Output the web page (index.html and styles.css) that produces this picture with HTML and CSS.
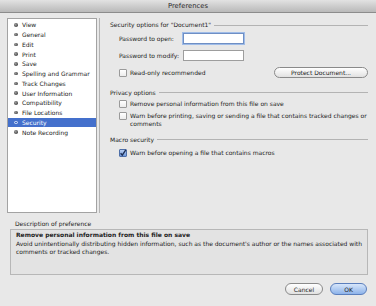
FILE: index.html
```html
<!DOCTYPE html>
<html lang="en">
  <head>
    <meta charset="UTF-8" />
    <title>Preferences</title>
    <link rel="stylesheet" href="styles.css">
  </head>
  <body>
    <div class="window">
      <div class="titlebar">Preferences</div>

      <div class="main">
        <ul class="sidebar">
          <li>View</li>
          <li>General</li>
          <li>Edit</li>
          <li>Print</li>
          <li>Save</li>
          <li>Spelling and Grammar</li>
          <li>Track Changes</li>
          <li>User Information</li>
          <li>Compatibility</li>
          <li>File Locations</li>
          <li class="selected">Security</li>
          <li>Note Recording</li>
        </ul>
        <div class="divider"></div>

        <div class="pane">
          <div class="group-title first">
            <span>Security options for "Document1"</span>
            <span class="rule"></span>
          </div>
          <div class="field">
            <label>Password to open:</label>
            <input type="text" class="focused" />
          </div>
          <div class="field">
            <label>Password to modify:</label>
            <input type="text" />
          </div>
          <div class="field readonly">
            <div class="check-row">
              <span class="box"></span>
              <span>Read-only recommended</span>
            </div>
            <button class="btn protect">Protect Document...</button>
          </div>

          <div class="group-title privacy">
            <span>Privacy options</span>
            <span class="rule"></span>
          </div>
          <div class="check-row option remove">
            <span class="box"></span>
            <span>Remove personal information from this file on save</span>
          </div>
          <div class="check-row option warn">
            <span class="box"></span>
            <span>Warn before printing, saving or sending a file that contains tracked changes or comments</span>
          </div>

          <div class="group-title macro">
            <span>Macro security</span>
            <span class="rule"></span>
          </div>
          <div class="check-row option macros">
            <span class="box checked">
              <svg width="8" height="8" viewBox="0 0 8 8">
                <path d="M1.6 4.2 L3.3 6.2 L6.8 0.9" fill="none" stroke="#1d2f55" stroke-width="1.4" />
              </svg>
            </span>
            <span>Warn before opening a file that contains macros</span>
          </div>
        </div>
      </div>

      <div class="desc">
        <div class="desc-label">Description of preference</div>
        <div class="desc-box">
          <div class="desc-title">Remove personal information from this file on save</div>
          <div>Avoid unintentionally distributing hidden information, such as the document's author or the names associated with comments or tracked changes.</div>
        </div>
      </div>

      <div class="buttons">
        <button class="btn cancel">Cancel</button>
        <button class="btn ok">OK</button>
      </div>
    </div>
  </body>
</html>
```

FILE: styles.css
```css
body {
  margin: 0;
  padding: 0;
  background-color: #e8e8e8;
  font-family: "DejaVu Sans", sans-serif;
  font-size: 6px;
  color: #222222;
}

.window {
  width: 376px;
  height: 306px;
  overflow: hidden;
}

.titlebar {
  height: 12px;
  line-height: 12px;
  text-align: center;
  font-size: 6.8px;
  color: #2a2a2a;
  background: linear-gradient(#e2e2e2, #b9b9b9);
  border-bottom: 1px solid #8c8c8c;
}

.main {
  display: flex;
  padding: 5px 8px 0 7px;
  height: 195px;
}

/* left list of categories */
.sidebar {
  list-style: none;
  margin: 0;
  padding: 1px 0 0 0;
  width: 88px;
  background-color: #ffffff;
  border: 1px solid #a3a3a3;
}

.sidebar li {
  display: flex;
  align-items: center;
  height: 9.75px;
  padding-left: 6px;
  white-space: nowrap;
}

.sidebar li::before {
  content: "";
  width: 3.5px;
  height: 3.5px;
  margin-right: 4.5px;
  border-radius: 50%;
  background: radial-gradient(circle at 35% 35%, #9a9a9a, #3c3c3c);
}

.sidebar li.selected {
  background-color: #4470cc;
  color: #ffffff;
}

.sidebar li.selected::before {
  background: none;
  border: 0.7px solid #dfe8fa;
  box-sizing: border-box;
}

.divider {
  width: 1px;
  margin-left: 2px;
  background-color: #b4b4b4;
}

/* right side options */
.pane {
  flex: 1;
  padding: 2px 0 0 10px;
}

.group-title {
  display: flex;
  align-items: center;
  height: 9px;
  white-space: nowrap;
}

.group-title .rule {
  flex: 1;
  height: 1px;
  margin: 1px 0 0 3px;
  background-color: #b3b3b3;
}

.group-title.privacy {
  margin-top: 9px;
  height: 10px;
}

.group-title.macro {
  margin-top: 6px;
  height: 10px;
}

.field {
  display: flex;
  align-items: center;
  height: 11px;
  margin-top: 6px;
  padding-left: 9px;
}

.group-title.first + .field {
  margin-top: 4px;
}

.field label {
  width: 64px;
}

.field input {
  width: 61px;
  height: 11px;
  box-sizing: border-box;
  padding: 0 2px;
  border: 1px solid #9d9d9d;
  background-color: #ffffff;
  font-family: inherit;
  font-size: 6px;
}

.field input.focused {
  border-color: #6f8fc4;
  box-shadow: 0 0 0 1px #9fbce8;
}

.field.readonly {
  justify-content: space-between;
}

.check-row {
  display: flex;
  align-items: center;
}

.box {
  flex: none;
  width: 8px;
  height: 8px;
  box-sizing: border-box;
  margin-right: 3px;
  border: 1px solid #9a9a9a;
  border-radius: 1px;
  background: linear-gradient(#ffffff, #ececec);
}

.box.checked {
  border-color: #4e6fa8;
  background: linear-gradient(#b9cff2, #6e98dc);
  position: relative;
}

.box.checked svg {
  position: absolute;
  left: -1px;
  top: -1px;
}

.option {
  padding-left: 9px;
  line-height: 8px;
}

.option.remove {
  margin-top: 2px;
  height: 10px;
}

.option.warn {
  margin-top: 3px;
  align-items: flex-start;
}

.option.warn .box {
  margin-top: 0;
}

.option.warn span:last-child {
  width: 238px;
}

.option.macros {
  margin-top: 4px;
  height: 10px;
}

/* buttons */
.btn {
  height: 11px;
  padding: 0;
  border: 1px solid #8a8a8a;
  border-radius: 6px;
  background: linear-gradient(#ffffff, #e1e1e1);
  font-family: inherit;
  font-size: 6px;
  color: #1c1c1c;
}

.btn.protect {
  width: 94px;
}

.desc {
  margin: 7px 8px 0 10px;
}

.desc-label {
  padding-left: 5px;
  line-height: 8px;
  margin-bottom: 1px;
}

.desc-box {
  height: 46px;
  box-sizing: border-box;
  padding: 1px 4px 0 5px;
  line-height: 8.5px;
  border: 1px solid #b7b7b7;
  background-color: #e3e3e3;
}

.desc-title {
  font-weight: bold;
}

.buttons {
  display: flex;
  justify-content: flex-end;
  gap: 7px;
  margin: 8px 9px 0 0;
}

.btn.cancel {
  width: 38px;
  height: 12px;
}

.btn.ok {
  width: 37px;
  height: 12px;
  border-color: #5b7fbd;
  background: linear-gradient(#d7e6fa, #8db3ea);
}
```
